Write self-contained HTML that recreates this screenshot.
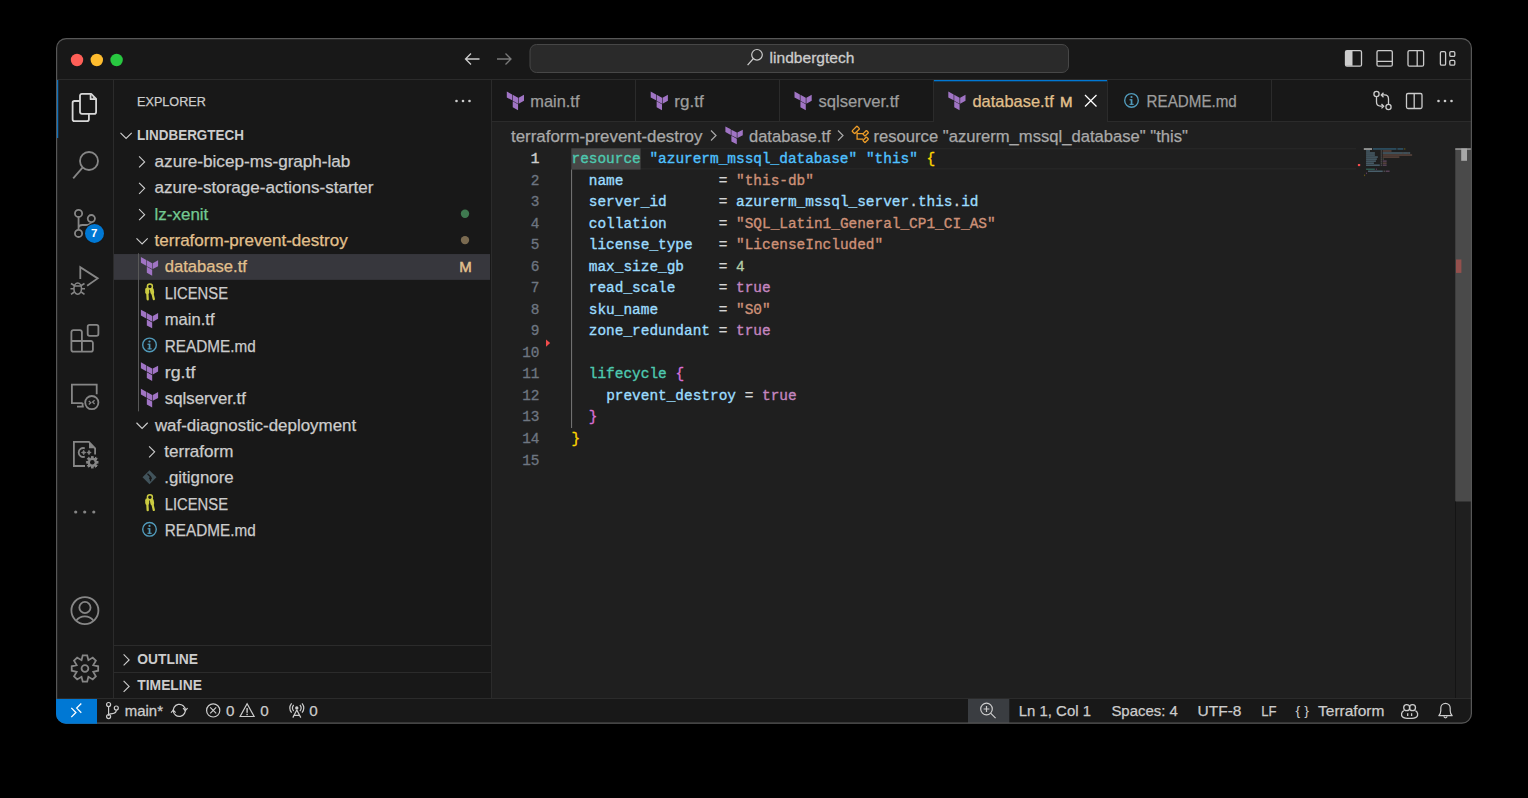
<!DOCTYPE html>
<html><head><meta charset="utf-8"><style>
*{margin:0;padding:0}
html,body{width:1528px;height:798px;background:#000;overflow:hidden}
svg{display:block;font-family:"Liberation Sans",sans-serif}
</style></head><body>
<svg width="1528" height="798" viewBox="0 0 1528 798">
<defs><clipPath id="wc"><rect x="56" y="38" width="1416" height="685.8" rx="10"/></clipPath><path id="tf" d="M1.44 0v7.575l6.561 3.79V3.787zm21.12 4.227l-6.561 3.791v7.574l6.56-3.787zM8.72 4.23v7.575l6.561 3.787V8.018zm0 8.405v7.575L15.28 24v-7.578z"/></defs>
<g clip-path="url(#wc)">
<rect x="56" y="38" width="1416" height="685.8" fill="#181818" />
<rect x="56" y="79" width="1416" height="1" fill="#2b2b2b" />
<circle cx="77" cy="60" r="6.2" fill="#fe5f57"/>
<circle cx="96.8" cy="60" r="6.2" fill="#febc2e"/>
<circle cx="116.6" cy="60" r="6.2" fill="#28c840"/>
<path d="M465.5 59h14 M471 53.5l-5.5 5.5 5.5 5.5" stroke="#cccccc" stroke-width="1.3" fill="none"/>
<path d="M497 59h14 M505.5 53.5l5.5 5.5-5.5 5.5" stroke="#7a7a7a" stroke-width="1.3" fill="none"/>
<rect x="530" y="44.5" width="538.5" height="28" rx="6.5" fill="#2a2a2a" stroke="#474747" stroke-width="1"/>
<circle cx="757" cy="54.8" r="5.3" stroke="#cccccc" stroke-width="1.2" fill="none"/><path d="M753.3 58.6L747.6 65.2" stroke="#cccccc" stroke-width="1.3"/>
<text x="769.6" y="62.9" font-size="15.1" fill="#cccccc" textLength="84.8" lengthAdjust="spacingAndGlyphs" stroke="#cccccc" stroke-width="0.3">lindbergtech</text>
<g fill="none" stroke="#cccccc" stroke-width="1.3"><rect x="1345.5" y="50.6" width="16" height="15.6" rx="1.5"/><rect x="1377" y="50.6" width="15.3" height="15.6" rx="1.5"/><path d="M1377 61.4h15.3"/><rect x="1408" y="50.6" width="15.6" height="15.6" rx="1.5"/><path d="M1417.2 50.6v15.6"/><rect x="1440.4" y="51.6" width="5.2" height="13.6" rx="1.3"/><rect x="1449.8" y="51.6" width="5" height="4.8" rx="1.2"/><rect x="1449.8" y="60.4" width="5" height="4.8" rx="1.2"/></g>
<rect x="1346" y="51" width="6.5" height="14.8" fill="#cccccc"/>
<rect x="113" y="80" width="1" height="619" fill="#2b2b2b" />
<rect x="56" y="80" width="2.2" height="58" fill="#0078d4" />
<g fill="none" stroke="#d7d7d7" stroke-width="1.8" stroke-linejoin="round"><path d="M81.9 93.9h9.3l4.9 4.9v13.1a1.9 1.9 0 0 1-1.9 1.9H81.9a1.9 1.9 0 0 1-1.9-1.9V95.8a1.9 1.9 0 0 1 1.9-1.9z"/><path d="M90.6 94.2v5h5.3"/><path d="M80 101H74.5a1.9 1.9 0 0 0-1.9 1.9v16.4a1.9 1.9 0 0 0 1.9 1.9h12.5a1.9 1.9 0 0 0 1.9-1.9V114"/></g>
<path d="M92.8 96.5l2.2 2.2h-2.2z" fill="#d7d7d7"/>
<g fill="none" stroke="#868686" stroke-width="1.8"><circle cx="89" cy="161" r="9"/><path d="M82.5 167.7L73.2 178.3"/><circle cx="78.55" cy="213.4" r="3.6"/><circle cx="91.35" cy="218.6" r="3.6"/><circle cx="78.55" cy="233.4" r="3.6"/><path d="M78.55 217v12.8 M78.55 228q0-3 4-3h3q5 0 6-3"/><path d="M80.3 279V267.2l17.4 11.2-10.6 7.3"/><path d="M71.4 341V332.1a1.9 1.9 0 0 1 1.9-1.9h6.7a1.9 1.9 0 0 1 1.9 1.9V341H91a1.9 1.9 0 0 1 1.9 1.9v6.9a1.9 1.9 0 0 1-1.9 1.9H73.3a1.9 1.9 0 0 1-1.9-1.9z M71.4 341h10.5 M81.9 341v10.7"/><rect x="87.7" y="324.9" width="10.7" height="11" rx="1.9"/><path d="M96.7 394.3V384.7H71.9v18.4h10.7 M82.6 403.1v3.6 M77 406.6h6.8"/><circle cx="91.8" cy="402.6" r="6.6"/><circle cx="84.9" cy="610.55" r="13.5"/><circle cx="84.95" cy="607.5" r="5.6"/><path d="M76.3 620.6a10 9 0 0 1 17 0"/><circle cx="84.95" cy="668.5" r="3.4"/></g>
<path d="M88.8 401l2 1.8-2 1.8 M94.6 400.3l-2 1.8 2 1.8" stroke="#868686" stroke-width="1.3" fill="none"/>
<circle cx="94.5" cy="233.4" r="10.3" fill="#181818"/><circle cx="94.5" cy="233.4" r="9.5" fill="#0078d4"/>
<text x="91.1" y="237.1" font-size="11.5" fill="#ffffff" font-weight="700" >7</text>
<g fill="none" stroke="#868686" stroke-width="1.6"><ellipse cx="77.7" cy="288.6" rx="3.8" ry="5.6"/><path d="M74 286h7.5 M71 283.5l3.3 2 M84.5 283.5l-3.3 2 M70.5 288.8h3.3 M81.5 288.8h3.5 M71 294.3l3.3-2.3 M84.5 294.3l-3.3-2.3"/></g>
<g fill="none" stroke="#868686" stroke-width="1.8"><path d="M85 466H73.9V441.9h15l6.2 6.4v6.3"/><path d="M84.8 448.3a4.5 4.5 0 1 0 0 8.4"/></g>
<path d="M89 441.9l6.2 6.4h-6.2z" fill="#868686"/>
<path d="M83.7 450.3l.6 1.6 1.6.6-1.6.6-.6 1.6-.6-1.6-1.6-.6 1.6-.6z M89 450.3l.6 1.6 1.6.6-1.6.6-.6 1.6-.6-1.6-1.6-.6 1.6-.6z" fill="#868686" stroke="#868686" stroke-width=".8"/>
<path d="M90.42 457.77 L90.51 455.64 L94.09 455.64 L94.18 457.77 L95.75 456.32 L98.28 458.85 L96.83 460.42 L98.96 460.51 L98.96 464.09 L96.83 464.18 L98.28 465.75 L95.75 468.28 L94.18 466.83 L94.09 468.96 L90.51 468.96 L90.42 466.83 L88.85 468.28 L86.32 465.75 L87.77 464.18 L85.64 464.09 L85.64 460.51 L87.77 460.42 L86.32 458.85 L88.85 456.32z" fill="#868686" stroke="#181818" stroke-width="1"/>
<circle cx="92.3" cy="462.3" r="2.3" fill="#181818"/>
<path d="M81.51 660.19 L82.74 655.28 L87.16 655.28 L88.39 660.19 L92.73 657.59 L95.86 660.72 L93.26 665.06 L98.17 666.29 L98.17 670.71 L93.26 671.94 L95.86 676.28 L92.73 679.41 L88.39 676.81 L87.16 681.72 L82.74 681.72 L81.51 676.81 L77.17 679.41 L74.04 676.28 L76.64 671.94 L71.73 670.71 L71.73 666.29 L76.64 665.06 L74.04 660.72 L77.17 657.59z" fill="none" stroke="#868686" stroke-width="1.8" stroke-linejoin="miter"/>
<circle cx="75.7" cy="512" r="1.6" fill="#868686"/>
<circle cx="84.7" cy="512" r="1.6" fill="#868686"/>
<circle cx="93.8" cy="512" r="1.6" fill="#868686"/>
<rect x="491" y="80" width="1" height="619" fill="#2b2b2b" />
<text x="137.1" y="105.8" font-size="13.2" fill="#cccccc" textLength="68.7" lengthAdjust="spacingAndGlyphs"  stroke="#cccccc" stroke-width="0.25">EXPLORER</text>
<circle cx="456.5" cy="101" r="1.3" fill="#cccccc"/>
<circle cx="463" cy="101" r="1.3" fill="#cccccc"/>
<circle cx="469.5" cy="101" r="1.3" fill="#cccccc"/>
<path d="M120.5 132.89999999999998l5.6 5.6 5.6-5.6" stroke="#cccccc" stroke-width="1.15" fill="none"/>
<text x="137.1" y="140.0" font-size="14.2" fill="#cccccc" font-weight="700" textLength="106.8" lengthAdjust="spacingAndGlyphs" >LINDBERGTECH</text>
<rect x="114" y="254.04999999999998" width="376" height="25.8" fill="#37373d" />
<rect x="138" y="253.25" width="1" height="158.10000000000002" fill="#585858" />
<path d="M139.1 156.45l5.5 5.5-5.5 5.5" stroke="#cccccc" stroke-width="1.15" fill="none"/>
<text x="154.6" y="167.04999999999998" font-size="16.3" fill="#cccccc" textLength="195.8" lengthAdjust="spacingAndGlyphs"  stroke="#cccccc" stroke-width="0.25">azure-bicep-ms-graph-lab</text>
<path d="M139.1 182.79999999999998l5.5 5.5-5.5 5.5" stroke="#cccccc" stroke-width="1.15" fill="none"/>
<text x="154.6" y="193.39999999999998" font-size="16.3" fill="#cccccc" textLength="218.9" lengthAdjust="spacingAndGlyphs"  stroke="#cccccc" stroke-width="0.25">azure-storage-actions-starter</text>
<path d="M139.1 209.15l5.5 5.5-5.5 5.5" stroke="#cccccc" stroke-width="1.15" fill="none"/>
<text x="154.6" y="219.75" font-size="16.3" fill="#73c991" textLength="53.7" lengthAdjust="spacingAndGlyphs"  stroke="#73c991" stroke-width="0.25">lz-xenit</text>
<circle cx="465" cy="213.75" r="4.2" fill="#3f7a50"/>
<path d="M136.5 238.29999999999998l5.6 5.6 5.6-5.6" stroke="#cccccc" stroke-width="1.15" fill="none"/>
<text x="154.6" y="246.1" font-size="16.3" fill="#e2c08d" textLength="193.1" lengthAdjust="spacingAndGlyphs"  stroke="#e2c08d" stroke-width="0.25">terraform-prevent-destroy</text>
<circle cx="465" cy="240.1" r="4.2" fill="#7a6a50"/>
<use href="#tf" fill="#a074c4" transform="translate(139.73 256.95) scale(0.8144 0.7792)"/>
<text x="164.70000000000002" y="272.45" font-size="16.3" fill="#e2c08d" textLength="82.2" lengthAdjust="spacingAndGlyphs"  stroke="#e2c08d" stroke-width="0.25">database.tf</text>
<text x="459.3" y="272.05" font-size="15" fill="#e2c08d" stroke="#e2c08d" stroke-width="0.5">M</text>
<g stroke="#cbcb41" fill="none" stroke-linecap="round"><circle cx="149.9" cy="286.40000000000003" r="2.5" stroke-width="1.5"/><path d="M147.2 289.5v2.8" stroke-width="4"/><path d="M147.3 292.3l.4 7" stroke-width="2.3"/><path d="M151.8 289.7l.5 2.8" stroke-width="3.8"/><path d="M152.2 292.3l1.6 6.8" stroke-width="2.3"/></g>
<text x="164.8" y="298.8" font-size="16.3" fill="#cccccc" textLength="63.2" lengthAdjust="spacingAndGlyphs"  stroke="#cccccc" stroke-width="0.25">LICENSE</text>
<use href="#tf" fill="#a074c4" transform="translate(139.73 309.65) scale(0.8144 0.7792)"/>
<text x="164.8" y="325.15" font-size="16.3" fill="#cccccc" textLength="49.8" lengthAdjust="spacingAndGlyphs"  stroke="#cccccc" stroke-width="0.25">main.tf</text>
<circle cx="149.5" cy="344.9" r="6.8" stroke="#519aba" stroke-width="1.4" fill="none"/><circle cx="149.5" cy="341.5" r="1.1" fill="#519aba"/><rect x="148.7" y="343.7" width="1.7" height="5.6" fill="#519aba"/><rect x="147.5" y="343.7" width="2" height="1.2" fill="#519aba"/><rect x="147.5" y="348.29999999999995" width="4.2" height="1.1" fill="#519aba"/>
<text x="164.8" y="351.5" font-size="16.3" fill="#cccccc" textLength="90.9" lengthAdjust="spacingAndGlyphs"  stroke="#cccccc" stroke-width="0.25">README.md</text>
<use href="#tf" fill="#a074c4" transform="translate(139.73 362.35) scale(0.8144 0.7792)"/>
<text x="164.8" y="377.85" font-size="16.3" fill="#cccccc" textLength="30.6" lengthAdjust="spacingAndGlyphs"  stroke="#cccccc" stroke-width="0.25">rg.tf</text>
<use href="#tf" fill="#a074c4" transform="translate(139.73 388.70) scale(0.8144 0.7792)"/>
<text x="164.8" y="404.2" font-size="16.3" fill="#cccccc" textLength="81.1" lengthAdjust="spacingAndGlyphs"  stroke="#cccccc" stroke-width="0.25">sqlserver.tf</text>
<path d="M136.5 422.75l5.6 5.6 5.6-5.6" stroke="#cccccc" stroke-width="1.15" fill="none"/>
<text x="154.9" y="430.55" font-size="16.3" fill="#cccccc" textLength="201.3" lengthAdjust="spacingAndGlyphs"  stroke="#cccccc" stroke-width="0.25">waf-diagnostic-deployment</text>
<path d="M149.1 446.3l5.5 5.5-5.5 5.5" stroke="#cccccc" stroke-width="1.15" fill="none"/>
<text x="164.3" y="456.90000000000003" font-size="16.3" fill="#cccccc" textLength="69.1" lengthAdjust="spacingAndGlyphs"  stroke="#cccccc" stroke-width="0.25">terraform</text>
<path d="M149.5 470.25l7 7-7 7-7-7z" fill="#41535b"/><path d="M147.5 473.75l3 3v4.5" stroke="#181818" stroke-width="1.3" fill="none"/><circle cx="150.5" cy="478.25" r="1.3" fill="#181818"/>
<text x="164.3" y="483.25" font-size="16.3" fill="#cccccc" textLength="69.4" lengthAdjust="spacingAndGlyphs"  stroke="#cccccc" stroke-width="0.25">.gitignore</text>
<g stroke="#cbcb41" fill="none" stroke-linecap="round"><circle cx="149.9" cy="497.20000000000005" r="2.5" stroke-width="1.5"/><path d="M147.2 500.3v2.8" stroke-width="4"/><path d="M147.3 503.1l.4 7" stroke-width="2.3"/><path d="M151.8 500.5l.5 2.8" stroke-width="3.8"/><path d="M152.2 503.1l1.6 6.8" stroke-width="2.3"/></g>
<text x="164.8" y="509.6" font-size="16.3" fill="#cccccc" textLength="63.2" lengthAdjust="spacingAndGlyphs"  stroke="#cccccc" stroke-width="0.25">LICENSE</text>
<circle cx="149.5" cy="529.35" r="6.8" stroke="#519aba" stroke-width="1.4" fill="none"/><circle cx="149.5" cy="525.95" r="1.1" fill="#519aba"/><rect x="148.7" y="528.15" width="1.7" height="5.6" fill="#519aba"/><rect x="147.5" y="528.15" width="2" height="1.2" fill="#519aba"/><rect x="147.5" y="532.75" width="4.2" height="1.1" fill="#519aba"/>
<text x="164.8" y="535.95" font-size="16.3" fill="#cccccc" textLength="90.9" lengthAdjust="spacingAndGlyphs"  stroke="#cccccc" stroke-width="0.25">README.md</text>
<rect x="114" y="645" width="377" height="1" fill="#2b2b2b" />
<rect x="114" y="672" width="377" height="1" fill="#2b2b2b" />
<path d="M123.6 654.4l5.5 5.5-5.5 5.5" stroke="#cccccc" stroke-width="1.15" fill="none"/>
<text x="137.3" y="664.2" font-size="14.2" fill="#cccccc" font-weight="700" textLength="60.6" lengthAdjust="spacingAndGlyphs" >OUTLINE</text>
<path d="M123.6 680.9l5.5 5.5-5.5 5.5" stroke="#cccccc" stroke-width="1.15" fill="none"/>
<text x="137.3" y="690.1" font-size="14.2" fill="#cccccc" font-weight="700" textLength="64.6" lengthAdjust="spacingAndGlyphs" >TIMELINE</text>
<rect x="492" y="80" width="980" height="619" fill="#1f1f1f" />
<rect x="492" y="80" width="980" height="41" fill="#181818" />
<rect x="492" y="121" width="980" height="1" fill="#2b2b2b" />
<rect x="635" y="80" width="1" height="41" fill="#2b2b2b" />
<use href="#tf" fill="#a074c4" transform="translate(505.63 91.50) scale(0.8144 0.7792)"/>
<text x="530.3" y="106.8" font-size="16.6" fill="#9d9d9d" textLength="49.2" lengthAdjust="spacingAndGlyphs"  stroke="#9d9d9d" stroke-width="0.25">main.tf</text>
<rect x="779" y="80" width="1" height="41" fill="#2b2b2b" />
<use href="#tf" fill="#a074c4" transform="translate(649.53 91.50) scale(0.8144 0.7792)"/>
<text x="674.3" y="106.8" font-size="16.6" fill="#9d9d9d" textLength="29.4" lengthAdjust="spacingAndGlyphs"  stroke="#9d9d9d" stroke-width="0.25">rg.tf</text>
<rect x="933" y="80" width="1" height="41" fill="#2b2b2b" />
<use href="#tf" fill="#a074c4" transform="translate(793.33 91.50) scale(0.8144 0.7792)"/>
<text x="818.5" y="106.8" font-size="16.6" fill="#9d9d9d" textLength="80.5" lengthAdjust="spacingAndGlyphs"  stroke="#9d9d9d" stroke-width="0.25">sqlserver.tf</text>
<rect x="934" y="80" width="173" height="42" fill="#1f1f1f" />
<rect x="934" y="80" width="173" height="1.3" fill="#0078d4" />
<rect x="1107" y="80" width="1" height="41" fill="#2b2b2b" />
<use href="#tf" fill="#a074c4" transform="translate(947.13 91.50) scale(0.8144 0.7792)"/>
<text x="972.5" y="106.8" font-size="16.6" fill="#e2c08d" textLength="81.2" lengthAdjust="spacingAndGlyphs"  stroke="#e2c08d" stroke-width="0.25">database.tf</text>
<text x="1060" y="106.5" font-size="15" fill="#e2c08d" stroke="#e2c08d" stroke-width="0.5">M</text>
<path d="M1085 95l11.5 11.5M1096.5 95l-11.5 11.5" stroke="#ffffff" stroke-width="1.25"/>
<rect x="1271" y="80" width="1" height="41" fill="#2b2b2b" />
<circle cx="1131.5" cy="100.4" r="6.8" stroke="#519aba" stroke-width="1.4" fill="none"/><circle cx="1131.5" cy="97.0" r="1.1" fill="#519aba"/><rect x="1130.7" y="99.2" width="1.7" height="5.6" fill="#519aba"/><rect x="1129.5" y="99.2" width="2" height="1.2" fill="#519aba"/><rect x="1129.5" y="103.80000000000001" width="4.2" height="1.1" fill="#519aba"/>
<text x="1146.6" y="106.8" font-size="16.6" fill="#9d9d9d" textLength="90.2" lengthAdjust="spacingAndGlyphs"  stroke="#9d9d9d" stroke-width="0.25">README.md</text>
<g fill="none" stroke="#cccccc" stroke-width="1.3"><circle cx="1376.5" cy="94" r="2.6"/><circle cx="1388.5" cy="107" r="2.6"/><path d="M1376.5 96.6v5.5q0 4 4 4h2 M1388.5 104.4v-5.5q0-4-4-4h-2 M1381.5 104l2.2 2.2-2.2 2.2 M1383.5 92.8l-2.2 2.2 2.2 2.2"/><rect x="1406.5" y="93.5" width="15.5" height="15" rx="1.5"/><path d="M1414.2 93.5v15"/></g>
<circle cx="1438.5" cy="101" r="1.3" fill="#cccccc"/>
<circle cx="1445" cy="101" r="1.3" fill="#cccccc"/>
<circle cx="1451.5" cy="101" r="1.3" fill="#cccccc"/>
<text x="511" y="141.6" font-size="16.9" fill="#a9a9a9" textLength="191.4" lengthAdjust="spacingAndGlyphs"  stroke="#a9a9a9" stroke-width="0.25">terraform-prevent-destroy</text>
<path d="M711 130.5l5 5-5 5" stroke="#a9a9a9" stroke-width="1.2" fill="none"/>
<use href="#tf" fill="#a074c4" transform="translate(724.21 126.50) scale(0.8239 0.7417)"/>
<text x="749" y="141.6" font-size="16.9" fill="#a9a9a9" textLength="81.7" lengthAdjust="spacingAndGlyphs"  stroke="#a9a9a9" stroke-width="0.25">database.tf</text>
<path d="M838 130.5l5 5-5 5" stroke="#a9a9a9" stroke-width="1.2" fill="none"/>
<g fill="none" stroke="#ee9d28" stroke-width="1.3"><rect x="852.3" y="128" width="7" height="3.8" rx="0.6" transform="rotate(-45 855.8 129.9)"/><rect x="863.2" y="131.8" width="5" height="3" rx="0.5" transform="rotate(-45 865.7 133.3)"/><rect x="863.2" y="138.3" width="5" height="3" rx="0.5" transform="rotate(-45 865.7 139.8)"/><path d="M857.1 132.3v6.9h6 M857.1 133.6h6"/></g>
<text x="873.5" y="141.6" font-size="16.9" fill="#a9a9a9" textLength="314.5" lengthAdjust="spacingAndGlyphs"  stroke="#a9a9a9" stroke-width="0.25">resource "azurerm_mssql_database" "this"</text>
<rect x="571.3" y="148.3" width="784.7" height="1" fill="#2a2a2a" />
<rect x="571.3" y="168.4" width="784.7" height="1" fill="#2a2a2a" />
<rect x="571.3" y="148.3" width="69.3" height="21.3" fill="#474747" />
<rect x="571" y="169.54" width="1.1" height="258.48" fill="#707070" />
<text x="539.5" y="163.0" font-size="14.43" fill="#cccccc" font-family='"Liberation Mono", monospace' text-anchor="end" stroke="#cccccc" stroke-width="0.5">1</text>
<text x="571.5" y="163.0" font-size="14.43" fill="#4ec9b0" font-family='"Liberation Mono", monospace' stroke="#4ec9b0" stroke-width="0.35">resource</text>
<text x="649.44" y="163.0" font-size="14.43" fill="#4fc1ff" font-family='"Liberation Mono", monospace' stroke="#4fc1ff" stroke-width="0.35">"azurerm_mssql_database"</text>
<text x="865.94" y="163.0" font-size="14.43" fill="#4fc1ff" font-family='"Liberation Mono", monospace' stroke="#4fc1ff" stroke-width="0.35">"this"</text>
<text x="926.56" y="163.0" font-size="14.43" fill="#ffd700" font-family='"Liberation Mono", monospace' stroke="#ffd700" stroke-width="0.35">{</text>
<text x="539.5" y="184.54" font-size="14.43" fill="#6e7681" font-family='"Liberation Mono", monospace' text-anchor="end" stroke="#6e7681" stroke-width="0.3">2</text>
<text x="588.82" y="184.54" font-size="14.43" fill="#9cdcfe" font-family='"Liberation Mono", monospace' stroke="#9cdcfe" stroke-width="0.35">name</text>
<text x="718.72" y="184.54" font-size="14.43" fill="#d4d4d4" font-family='"Liberation Mono", monospace' stroke="#d4d4d4" stroke-width="0.35">=</text>
<text x="736.04" y="184.54" font-size="14.43" fill="#ce9178" font-family='"Liberation Mono", monospace' stroke="#ce9178" stroke-width="0.35">"this-db"</text>
<text x="539.5" y="206.07999999999998" font-size="14.43" fill="#6e7681" font-family='"Liberation Mono", monospace' text-anchor="end" stroke="#6e7681" stroke-width="0.3">3</text>
<text x="588.82" y="206.08" font-size="14.43" fill="#9cdcfe" font-family='"Liberation Mono", monospace' stroke="#9cdcfe" stroke-width="0.35">server_id</text>
<text x="718.72" y="206.08" font-size="14.43" fill="#d4d4d4" font-family='"Liberation Mono", monospace' stroke="#d4d4d4" stroke-width="0.35">=</text>
<text x="736.04" y="206.08" font-size="14.43" fill="#9cdcfe" font-family='"Liberation Mono", monospace' stroke="#9cdcfe" stroke-width="0.35">azurerm_mssql_server</text>
<text x="909.24" y="206.08" font-size="14.43" fill="#d4d4d4" font-family='"Liberation Mono", monospace' stroke="#d4d4d4" stroke-width="0.35">.</text>
<text x="917.9" y="206.08" font-size="14.43" fill="#9cdcfe" font-family='"Liberation Mono", monospace' stroke="#9cdcfe" stroke-width="0.35">this</text>
<text x="952.54" y="206.08" font-size="14.43" fill="#d4d4d4" font-family='"Liberation Mono", monospace' stroke="#d4d4d4" stroke-width="0.35">.</text>
<text x="961.2" y="206.08" font-size="14.43" fill="#9cdcfe" font-family='"Liberation Mono", monospace' stroke="#9cdcfe" stroke-width="0.35">id</text>
<text x="539.5" y="227.62" font-size="14.43" fill="#6e7681" font-family='"Liberation Mono", monospace' text-anchor="end" stroke="#6e7681" stroke-width="0.3">4</text>
<text x="588.82" y="227.62" font-size="14.43" fill="#9cdcfe" font-family='"Liberation Mono", monospace' stroke="#9cdcfe" stroke-width="0.35">collation</text>
<text x="718.72" y="227.62" font-size="14.43" fill="#d4d4d4" font-family='"Liberation Mono", monospace' stroke="#d4d4d4" stroke-width="0.35">=</text>
<text x="736.04" y="227.62" font-size="14.43" fill="#ce9178" font-family='"Liberation Mono", monospace' stroke="#ce9178" stroke-width="0.35">"SQL_Latin1_General_CP1_CI_AS"</text>
<text x="539.5" y="249.16" font-size="14.43" fill="#6e7681" font-family='"Liberation Mono", monospace' text-anchor="end" stroke="#6e7681" stroke-width="0.3">5</text>
<text x="588.82" y="249.16" font-size="14.43" fill="#9cdcfe" font-family='"Liberation Mono", monospace' stroke="#9cdcfe" stroke-width="0.35">license_type</text>
<text x="718.72" y="249.16" font-size="14.43" fill="#d4d4d4" font-family='"Liberation Mono", monospace' stroke="#d4d4d4" stroke-width="0.35">=</text>
<text x="736.04" y="249.16" font-size="14.43" fill="#ce9178" font-family='"Liberation Mono", monospace' stroke="#ce9178" stroke-width="0.35">"LicenseIncluded"</text>
<text x="539.5" y="270.7" font-size="14.43" fill="#6e7681" font-family='"Liberation Mono", monospace' text-anchor="end" stroke="#6e7681" stroke-width="0.3">6</text>
<text x="588.82" y="270.7" font-size="14.43" fill="#9cdcfe" font-family='"Liberation Mono", monospace' stroke="#9cdcfe" stroke-width="0.35">max_size_gb</text>
<text x="718.72" y="270.7" font-size="14.43" fill="#d4d4d4" font-family='"Liberation Mono", monospace' stroke="#d4d4d4" stroke-width="0.35">=</text>
<text x="736.04" y="270.7" font-size="14.43" fill="#b5cea8" font-family='"Liberation Mono", monospace' stroke="#b5cea8" stroke-width="0.35">4</text>
<text x="539.5" y="292.24" font-size="14.43" fill="#6e7681" font-family='"Liberation Mono", monospace' text-anchor="end" stroke="#6e7681" stroke-width="0.3">7</text>
<text x="588.82" y="292.24" font-size="14.43" fill="#9cdcfe" font-family='"Liberation Mono", monospace' stroke="#9cdcfe" stroke-width="0.35">read_scale</text>
<text x="718.72" y="292.24" font-size="14.43" fill="#d4d4d4" font-family='"Liberation Mono", monospace' stroke="#d4d4d4" stroke-width="0.35">=</text>
<text x="736.04" y="292.24" font-size="14.43" fill="#c586c0" font-family='"Liberation Mono", monospace' stroke="#c586c0" stroke-width="0.35">true</text>
<text x="539.5" y="313.78000000000003" font-size="14.43" fill="#6e7681" font-family='"Liberation Mono", monospace' text-anchor="end" stroke="#6e7681" stroke-width="0.3">8</text>
<text x="588.82" y="313.78" font-size="14.43" fill="#9cdcfe" font-family='"Liberation Mono", monospace' stroke="#9cdcfe" stroke-width="0.35">sku_name</text>
<text x="718.72" y="313.78" font-size="14.43" fill="#d4d4d4" font-family='"Liberation Mono", monospace' stroke="#d4d4d4" stroke-width="0.35">=</text>
<text x="736.04" y="313.78" font-size="14.43" fill="#ce9178" font-family='"Liberation Mono", monospace' stroke="#ce9178" stroke-width="0.35">"S0"</text>
<text x="539.5" y="335.32" font-size="14.43" fill="#6e7681" font-family='"Liberation Mono", monospace' text-anchor="end" stroke="#6e7681" stroke-width="0.3">9</text>
<text x="588.82" y="335.32" font-size="14.43" fill="#9cdcfe" font-family='"Liberation Mono", monospace' stroke="#9cdcfe" stroke-width="0.35">zone_redundant</text>
<text x="718.72" y="335.32" font-size="14.43" fill="#d4d4d4" font-family='"Liberation Mono", monospace' stroke="#d4d4d4" stroke-width="0.35">=</text>
<text x="736.04" y="335.32" font-size="14.43" fill="#c586c0" font-family='"Liberation Mono", monospace' stroke="#c586c0" stroke-width="0.35">true</text>
<text x="539.5" y="356.85999999999996" font-size="14.43" fill="#6e7681" font-family='"Liberation Mono", monospace' text-anchor="end" stroke="#6e7681" stroke-width="0.3">10</text>
<text x="539.5" y="378.4" font-size="14.43" fill="#6e7681" font-family='"Liberation Mono", monospace' text-anchor="end" stroke="#6e7681" stroke-width="0.3">11</text>
<text x="588.82" y="378.4" font-size="14.43" fill="#4ec9b0" font-family='"Liberation Mono", monospace' stroke="#4ec9b0" stroke-width="0.35">lifecycle</text>
<text x="675.42" y="378.4" font-size="14.43" fill="#da70d6" font-family='"Liberation Mono", monospace' stroke="#da70d6" stroke-width="0.35">{</text>
<text x="539.5" y="399.94" font-size="14.43" fill="#6e7681" font-family='"Liberation Mono", monospace' text-anchor="end" stroke="#6e7681" stroke-width="0.3">12</text>
<text x="606.14" y="399.94" font-size="14.43" fill="#9cdcfe" font-family='"Liberation Mono", monospace' stroke="#9cdcfe" stroke-width="0.35">prevent_destroy</text>
<text x="744.7" y="399.94" font-size="14.43" fill="#d4d4d4" font-family='"Liberation Mono", monospace' stroke="#d4d4d4" stroke-width="0.35">=</text>
<text x="762.02" y="399.94" font-size="14.43" fill="#c586c0" font-family='"Liberation Mono", monospace' stroke="#c586c0" stroke-width="0.35">true</text>
<text x="539.5" y="421.48" font-size="14.43" fill="#6e7681" font-family='"Liberation Mono", monospace' text-anchor="end" stroke="#6e7681" stroke-width="0.3">13</text>
<text x="588.82" y="421.48" font-size="14.43" fill="#da70d6" font-family='"Liberation Mono", monospace' stroke="#da70d6" stroke-width="0.35">}</text>
<text x="539.5" y="443.02" font-size="14.43" fill="#6e7681" font-family='"Liberation Mono", monospace' text-anchor="end" stroke="#6e7681" stroke-width="0.3">14</text>
<text x="571.5" y="443.02" font-size="14.43" fill="#ffd700" font-family='"Liberation Mono", monospace' stroke="#ffd700" stroke-width="0.35">}</text>
<text x="539.5" y="464.56" font-size="14.43" fill="#6e7681" font-family='"Liberation Mono", monospace' text-anchor="end" stroke="#6e7681" stroke-width="0.3">15</text>
<path d="M546 339.4l4.2 3.6-4.2 3.7z" fill="#f14c4c"/>
<rect x="1364.10" y="148.20" width="7.84" height="1.5" fill="#4ec9b0" opacity="0.34"/>
<rect x="1372.92" y="148.20" width="23.52" height="1.5" fill="#4fc1ff" opacity="0.34"/>
<rect x="1397.42" y="148.20" width="5.88" height="1.5" fill="#4fc1ff" opacity="0.34"/>
<rect x="1404.28" y="148.20" width="0.98" height="1.5" fill="#ffd700" opacity="0.34"/>
<rect x="1366.06" y="150.23" width="3.92" height="1.5" fill="#9cdcfe" opacity="0.34"/>
<rect x="1380.76" y="150.23" width="0.98" height="1.5" fill="#d4d4d4" opacity="0.34"/>
<rect x="1382.72" y="150.23" width="8.82" height="1.5" fill="#ce9178" opacity="0.34"/>
<rect x="1366.06" y="152.26" width="8.82" height="1.5" fill="#9cdcfe" opacity="0.34"/>
<rect x="1380.76" y="152.26" width="0.98" height="1.5" fill="#d4d4d4" opacity="0.34"/>
<rect x="1382.72" y="152.26" width="19.60" height="1.5" fill="#9cdcfe" opacity="0.34"/>
<rect x="1402.32" y="152.26" width="0.98" height="1.5" fill="#d4d4d4" opacity="0.34"/>
<rect x="1403.30" y="152.26" width="3.92" height="1.5" fill="#9cdcfe" opacity="0.34"/>
<rect x="1407.22" y="152.26" width="0.98" height="1.5" fill="#d4d4d4" opacity="0.34"/>
<rect x="1408.20" y="152.26" width="1.96" height="1.5" fill="#9cdcfe" opacity="0.34"/>
<rect x="1366.06" y="154.29" width="8.82" height="1.5" fill="#9cdcfe" opacity="0.34"/>
<rect x="1380.76" y="154.29" width="0.98" height="1.5" fill="#d4d4d4" opacity="0.34"/>
<rect x="1382.72" y="154.29" width="29.40" height="1.5" fill="#ce9178" opacity="0.34"/>
<rect x="1366.06" y="156.32" width="11.76" height="1.5" fill="#9cdcfe" opacity="0.34"/>
<rect x="1380.76" y="156.32" width="0.98" height="1.5" fill="#d4d4d4" opacity="0.34"/>
<rect x="1382.72" y="156.32" width="16.66" height="1.5" fill="#ce9178" opacity="0.34"/>
<rect x="1366.06" y="158.35" width="10.78" height="1.5" fill="#9cdcfe" opacity="0.34"/>
<rect x="1380.76" y="158.35" width="0.98" height="1.5" fill="#d4d4d4" opacity="0.34"/>
<rect x="1382.72" y="158.35" width="0.98" height="1.5" fill="#b5cea8" opacity="0.34"/>
<rect x="1366.06" y="160.38" width="9.80" height="1.5" fill="#9cdcfe" opacity="0.34"/>
<rect x="1380.76" y="160.38" width="0.98" height="1.5" fill="#d4d4d4" opacity="0.34"/>
<rect x="1382.72" y="160.38" width="3.92" height="1.5" fill="#c586c0" opacity="0.34"/>
<rect x="1366.06" y="162.41" width="7.84" height="1.5" fill="#9cdcfe" opacity="0.34"/>
<rect x="1380.76" y="162.41" width="0.98" height="1.5" fill="#d4d4d4" opacity="0.34"/>
<rect x="1382.72" y="162.41" width="3.92" height="1.5" fill="#ce9178" opacity="0.34"/>
<rect x="1366.06" y="164.44" width="13.72" height="1.5" fill="#9cdcfe" opacity="0.34"/>
<rect x="1380.76" y="164.44" width="0.98" height="1.5" fill="#d4d4d4" opacity="0.34"/>
<rect x="1382.72" y="164.44" width="3.92" height="1.5" fill="#c586c0" opacity="0.34"/>
<rect x="1366.06" y="168.50" width="8.82" height="1.5" fill="#4ec9b0" opacity="0.34"/>
<rect x="1375.86" y="168.50" width="0.98" height="1.5" fill="#da70d6" opacity="0.34"/>
<rect x="1368.02" y="170.53" width="14.70" height="1.5" fill="#9cdcfe" opacity="0.34"/>
<rect x="1383.70" y="170.53" width="0.98" height="1.5" fill="#d4d4d4" opacity="0.34"/>
<rect x="1385.66" y="170.53" width="3.92" height="1.5" fill="#c586c0" opacity="0.34"/>
<rect x="1366.06" y="172.56" width="0.98" height="1.5" fill="#da70d6" opacity="0.34"/>
<rect x="1364.10" y="174.59" width="0.98" height="1.5" fill="#ffd700" opacity="0.34"/>
<rect x="1363.8" y="148.1" width="8.24" height="1.9" fill="#8f8f8f" />
<rect x="1357.9" y="164" width="2.3" height="2.1" fill="#f14c4c" />
<rect x="1455.3" y="148.2" width="16.2" height="353.3" fill="#4a4a4a" />
<rect x="1455.3" y="148.2" width="16.2" height="1.8" fill="#8a8a8a" />
<rect x="1455" y="501.5" width="1" height="197" fill="#141414" />
<rect x="1461.2" y="148.5" width="5.8" height="12.3" fill="#a8a8a8" />
<rect x="1456" y="259.5" width="5.4" height="13.4" fill="#94504d" />
<rect x="56" y="698" width="1416" height="1" fill="#2b2b2b" />
<g fill="none" stroke="#cccccc" stroke-width="1.2"><circle cx="108.6" cy="704.5" r="2"/><circle cx="108.6" cy="716.6" r="2"/><circle cx="116.3" cy="708" r="2"/><path d="M108.6 706.5v8.1 M116.3 710q0 3.2-4 3.6t-3.7 2.2"/></g>
<text x="124.8" y="716.2" font-size="15.2" fill="#cccccc" textLength="38.2" lengthAdjust="spacingAndGlyphs" stroke="#cccccc" stroke-width="0.3">main*</text>
<g fill="none" stroke="#cccccc" stroke-width="1.2"><path d="M173.7 712.5A6 6 0 1 1 185.3 710.4 M184.9 708.3A6 6 0 1 1 173.3 710.4"/><path d="M183.1 708.2l2.2 2.4 2.3-2.4 M171 712.6l2.3-2.4 2.3 2.4"/></g>
<g fill="none" stroke="#cccccc" stroke-width="1.2"><circle cx="213.2" cy="710.4" r="6.6"/><path d="M210.2 707.4l6 6M216.2 707.4l-6 6"/><path d="M247.1 703.8l7 12.7h-14z"/></g>
<rect x="246.4" y="708" width="1.4" height="4.8" fill="#cccccc"/><rect x="246.4" y="713.8" width="1.4" height="1.4" fill="#cccccc"/>
<text x="226" y="716.2" font-size="15.2" fill="#cccccc"  stroke="#cccccc" stroke-width="0.25">0</text>
<text x="260.3" y="716.2" font-size="15.2" fill="#cccccc"  stroke="#cccccc" stroke-width="0.25">0</text>
<g fill="none" stroke="#cccccc" stroke-width="1.2"><path d="M291.6 703.3a7.7 7.7 0 0 0 0 9.4 M293.7 705a4.6 4.6 0 0 0 0 6 M302 703.3a7.7 7.7 0 0 1 0 9.4 M299.9 705a4.6 4.6 0 0 1 0 6 M296.8 710L292.8 717.6 M296.8 710L300.8 717.6 M294.2 715.3h5.2"/></g>
<circle cx="296.8" cy="708" r="1.7" fill="#cccccc"/>
<text x="309.3" y="716.2" font-size="15.2" fill="#cccccc"  stroke="#cccccc" stroke-width="0.25">0</text>
<rect x="968" y="699" width="41.3" height="24" fill="#3a3d41" />
<g fill="none" stroke="#cccccc" stroke-width="1.2"><circle cx="986.5" cy="709" r="5.8"/><path d="M990.6 713.1l5 5 M983.6 709h5.8 M986.5 706.1v5.8"/></g>
<text x="1018.7" y="716.3" font-size="15.2" fill="#cccccc" textLength="72.3" lengthAdjust="spacingAndGlyphs"  stroke="#cccccc" stroke-width="0.25">Ln 1, Col 1</text>
<text x="1111.4" y="716.3" font-size="15.2" fill="#cccccc" textLength="66.4" lengthAdjust="spacingAndGlyphs"  stroke="#cccccc" stroke-width="0.25">Spaces: 4</text>
<text x="1197.6" y="716.3" font-size="15.2" fill="#cccccc" textLength="43.9" lengthAdjust="spacingAndGlyphs"  stroke="#cccccc" stroke-width="0.25">UTF-8</text>
<text x="1261.2" y="716.3" font-size="15.2" fill="#cccccc" textLength="15.3" lengthAdjust="spacingAndGlyphs"  stroke="#cccccc" stroke-width="0.25">LF</text>
<text x="1295.6" y="715.3" font-size="13.5" fill="#cccccc" textLength="13.4" lengthAdjust="spacingAndGlyphs" stroke="none">{ }</text>
<text x="1318" y="716.3" font-size="15.2" fill="#cccccc" textLength="66.4" lengthAdjust="spacingAndGlyphs"  stroke="#cccccc" stroke-width="0.25">Terraform</text>
<g fill="none" stroke="#cccccc" stroke-width="1.3"><circle cx="1406.7" cy="707.7" r="3"/><circle cx="1412.5" cy="707.7" r="3"/><path d="M1403.8 710.6C1401.3 711.8 1400.8 715.5 1402.6 716.9C1405 718.9 1414.2 718.9 1416.6 716.9C1418.4 715.5 1417.9 711.8 1415.4 710.6"/><path d="M1407.7 713.3v2.6 M1411.6 713.3v2.6"/></g>
<g fill="none" stroke="#cccccc" stroke-width="1.2" stroke-linejoin="round"><path d="M1438.8 715.6q2-1.6 2-5.2v-2.4a4.7 4.7 0 0 1 9.4 0v2.4q0 3.6 2 5.2z"/><path d="M1444 716.3a1.5 1.5 0 0 0 3 0"/></g>
</g>
<rect x="56.6" y="38.6" width="1414.8" height="684.6" rx="9.6" fill="none" stroke="#575757" stroke-width="1.2"/>
<g clip-path="url(#wc)"><rect x="56" y="699" width="41" height="25" fill="#0078d4"/></g>
<path d="M71.3 707.9l4.6 4.6-4.6 4.6 M81.3 703.5l-4.6 4.6 4.6 4.6" stroke="#ffffff" stroke-width="1.3" fill="none"/>
</svg>
</body></html>
